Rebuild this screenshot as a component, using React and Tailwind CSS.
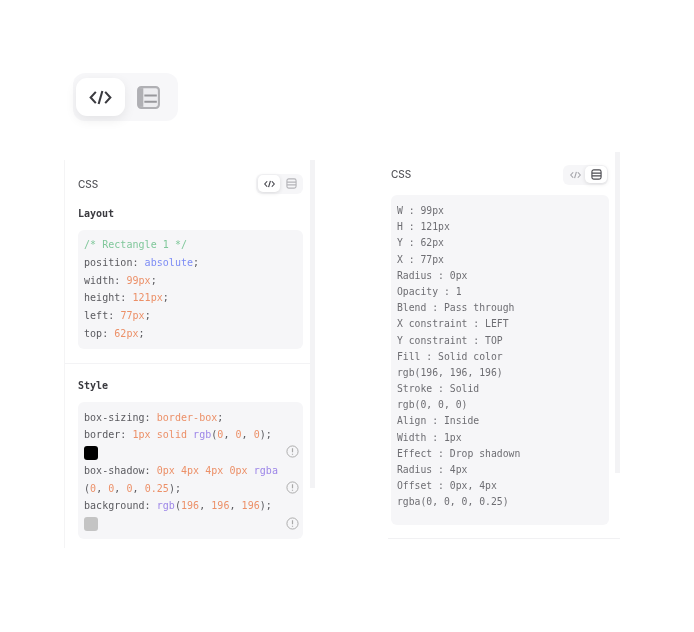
const mono = "[font-family:'DejaVu_Sans_Mono','Liberation_Mono',monospace]";

function CodeIcon({ w, h, color, sw = 2 }) {
  return (
    <svg width={w} height={h} viewBox="0 0 24 16" fill="none" stroke={color} strokeWidth={sw} strokeLinecap="butt">
      <path d="M7 2 L1.5 8 L7 14" />
      <path d="M17 2 L22.5 8 L17 14" />
      <path d="M14 1 L10 15" />
    </svg>
  );
}

function ListIcon({ size, color, fill }) {
  return (
    <svg width={size} height={size} viewBox="0 0 24 24" fill="none" stroke={color} strokeWidth="2">
      <rect x="2" y="2" width="20" height="20" rx="3" fill={fill} />
      <path d="M2 3 H7 V21 H2 Z" fill={color} stroke="none" />
      <path d="M8 10 H20 M8 16 H20" strokeWidth="2" stroke="#98989c" />
    </svg>
  );
}

function SmallList({ size, color }) {
  return (
    <svg width={size} height={size} viewBox="0 0 24 24" fill="none" stroke={color} strokeWidth="2.4">
      <rect x="2" y="2" width="20" height="20" rx="4" />
      <path d="M2 9 H22 M2 15 H22" strokeWidth="2.2" />
    </svg>
  );
}

function Toggle({ active, w }) {
  const on = "w-[22px] h-[17px] bg-white rounded-[5px] flex items-center justify-center shadow-[0_1px_4px_rgba(0,0,0,0.12)]";
  const off = "flex-1 h-[17px] flex items-center justify-center";
  return (
    <div className={`h-[20px] pl-[2px] pr-[1px] bg-[#f6f6f8] rounded-[6px] flex items-center ${w}`}>
      <div className={active === "code" ? on : off}>
        <CodeIcon w={11} h={8} color={active === "code" ? "#3f3f46" : "#a3a3a8"} sw={2.4} />
      </div>
      <div className={active === "list" ? on : off}>
        <SmallList size={11} color={active === "list" ? "#4b4b50" : "#b4b4b8"} />
      </div>
    </div>
  );
}

function Scrollbar({ h }) {
  return <div className={`absolute top-0 right-0 w-[5px] bg-[#f3f3f5] ${h}`} />;
}

function Warn() {
  return (
    <svg className="mb-[2px]" width="13" height="13" viewBox="0 0 14 14" fill="none" stroke="#a8a8a8" strokeWidth="1">
      <circle cx="7" cy="7" r="6" />
      <path d="M7 3.6 V7.8 M7 9.4 V10.4" strokeWidth="1.3" />
    </svg>
  );
}

const P = ({ children }) => <span className="text-[#ec9068]">{children}</span>;
const B = ({ children }) => <span className="text-[#7d8cf5]">{children}</span>;
const V = ({ children }) => <span className="text-[#9d86e8]">{children}</span>;

const rightLines = [
  "W : 99px", "H : 121px", "Y : 62px", "X : 77px", "Radius : 0px", "Opacity : 1",
  "Blend : Pass through", "X constraint : LEFT", "Y constraint : TOP", "Fill : Solid color",
  "rgb(196, 196, 196)", "Stroke : Solid", "rgb(0, 0, 0)", "Align : Inside", "Width : 1px",
  "Effect : Drop shadown", "Radius : 4px", "Offset : 0px, 4px", "rgba(0, 0, 0, 0.25)",
];

export default function App() {
  const label = "[font-family:'Inter',sans-serif] text-[10px] font-medium text-[#55555a]";
  const head = "h-[14px] leading-[14px] text-[10px] font-bold text-[#3a3a3f] [font-family:'DejaVu_Sans_Mono',monospace]";
  const row = "h-[17.8px] leading-[17.8px] whitespace-pre";
  return (
    <div className="w-[694px] h-[632px] bg-white overflow-hidden blur-[0.4px] relative">
      <div className="pt-[73px] pl-[73px]">
        <div className="w-[105px] h-[48px] bg-[#f7f7f9] rounded-[12px] flex items-center pl-[3px] gap-[11px]">
          <div className="w-[49px] h-[38px] bg-white rounded-[11px] flex items-center justify-center shadow-[0_4px_12px_rgba(0,0,0,0.08)]">
            <CodeIcon w={25} h={15} color="#3a3a3f" sw={2.2} />
          </div>
          <ListIcon size={25} color="#b0b0b4" fill="#ededf0" />
        </div>
      </div>

      <div className="flex items-start pl-[64px]">
        <div className="relative w-[251px] h-[388px] mt-[39px] border-l border-[#f4f4f5] shrink-0">
          <Scrollbar h="h-[328px]" />
          <div className="pl-[13px] pr-[12px] pt-[14px]">
            <div className="flex items-center justify-between h-[19px]">
              <span className={`${label} pt-[2px]`}>CSS</span>
              <Toggle active="code" w="w-[47px]" />
            </div>
            <div className={`mt-[14px] ${head}`}>Layout</div>
            <div className={`mt-[9px] w-[225px] h-[119px] bg-[#f6f6f8] rounded-[6px] px-[6px] pt-[6px] text-[10px] tracking-[0.04px] text-[#5a5a5f] ${mono}`}>
              <div className={`${row} text-[#7fc79a]`}>/* Rectangle 1 */</div>
              <div className={row}>position: <B>absolute</B>;</div>
              <div className={row}>width: <P>99px</P>;</div>
              <div className={row}>height: <P>121px</P>;</div>
              <div className={row}>left: <P>77px</P>;</div>
              <div className={row}>top: <P>62px</P>;</div>
            </div>
          </div>
          <div className="mt-[14px] h-px bg-[#f3f3f5]" />
          <div className="pl-[13px] pr-[12px]">
            <div className={`mt-[15px] ${head}`}>Style</div>
            <div className={`mt-[9px] w-[225px] h-[137px] bg-[#f6f6f8] rounded-[6px] pl-[6px] pr-[4px] pt-[6.5px] text-[10px] tracking-[0.04px] text-[#5a5a5f] ${mono}`}>
              <div className={row}>box-sizing: <P>border-box</P>;</div>
              <div className={row}>border: <P>1px solid</P> <V>rgb</V>(<P>0</P>, <P>0</P>, <P>0</P>);</div>
              <div className="h-[17.8px] flex items-center justify-between">
                <div className="w-[14px] h-[14px] rounded-[3px] bg-black" />
                <Warn />
              </div>
              <div className={row}>box-shadow: <P>0px 4px 4px 0px</P> <V>rgba</V></div>
              <div className="h-[17.8px] flex items-center justify-between">
                <span>(<P>0</P>, <P>0</P>, <P>0</P>, <P>0.25</P>);</span>
                <Warn />
              </div>
              <div className={row}>background: <V>rgb</V>(<P>196</P>, <P>196</P>, <P>196</P>);</div>
              <div className="h-[17.8px] flex items-center justify-between">
                <div className="w-[14px] h-[14px] rounded-[3px] bg-[#c4c4c4]" />
                <Warn />
              </div>
            </div>
          </div>
        </div>

        <div className="relative w-[232px] ml-[73px] mt-[31px] h-[387px] shrink-0 border-b border-[#f1f1f3]">
          <Scrollbar h="h-[321px]" />
          <div className="pl-[3px] pr-[11px] pt-[13px]">
            <div className="flex items-center justify-between h-[19px]">
              <span className={label}>CSS</span>
              <div className="mr-[1px]">
                <Toggle active="list" w="w-[45px]" />
              </div>
            </div>
            <div className={`mt-[11px] h-[330px] bg-[#f6f6f8] rounded-[6px] pl-[6px] pt-[8px] text-[9.75px] text-[#6e6e73] ${mono}`}>
              {rightLines.map((l, i) => (
                <div key={i} className="h-[16.2px] leading-[16.2px] whitespace-pre">{l}</div>
              ))}
            </div>
          </div>
        </div>
      </div>
    </div>
  );
}
